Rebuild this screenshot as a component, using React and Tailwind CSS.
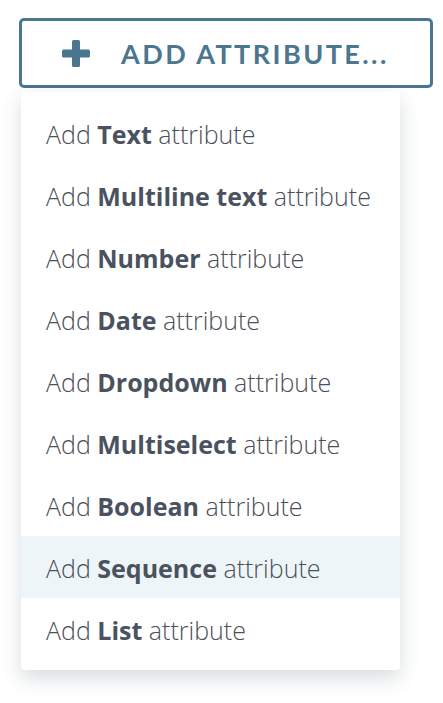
import React from "react";

const items = [
  "Text",
  "Multiline text",
  "Number",
  "Date",
  "Dropdown",
  "Multiselect",
  "Boolean",
  "Sequence",
  "List",
];

export default function App() {
  return (
    <div
      className="min-h-[703px] w-[443px] bg-white pl-[19px] pt-[18px]"
      style={{ fontFamily: "Lato, 'Open Sans', sans-serif" }}
    >
      <button className="flex h-[70px] w-[414px] items-center rounded-[5px] border-[3px] border-[#4a7690] bg-white pl-[40px] text-[#4a7690]">
        <svg width="28" height="27" viewBox="0 0 28 27" className="shrink-0">
          <rect x="10" y="0" width="8" height="27" rx="1.5" fill="#4a7690" />
          <rect x="0" y="9.5" width="28" height="8" rx="1.5" fill="#4a7690" />
        </svg>
        <span className="ml-[31px] text-[27px] font-bold leading-none tracking-[0.09em]">
          ADD ATTRIBUTE...
        </span>
      </button>
      <div className="ml-[2px] mt-[4px] w-[379px] rounded-[4px] bg-white py-[10px] shadow-[0_8px_20px_rgba(40,60,80,0.18)]">
        {items.map((t) => (
          <div
            key={t}
            className={`flex h-[62px] items-center pl-[25px] pt-[4px] text-[25px] font-light text-[#4b4f58] ${
              t === "Sequence" ? "bg-[#eef5f8]" : ""
            }`}
            style={{ fontFamily: "'Open Sans', sans-serif" }}
          >
            <span className="whitespace-nowrap">
              Add <span className="font-bold text-[#4a5260]">{t}</span> attribute
            </span>
          </div>
        ))}
      </div>
    </div>
  );
}
